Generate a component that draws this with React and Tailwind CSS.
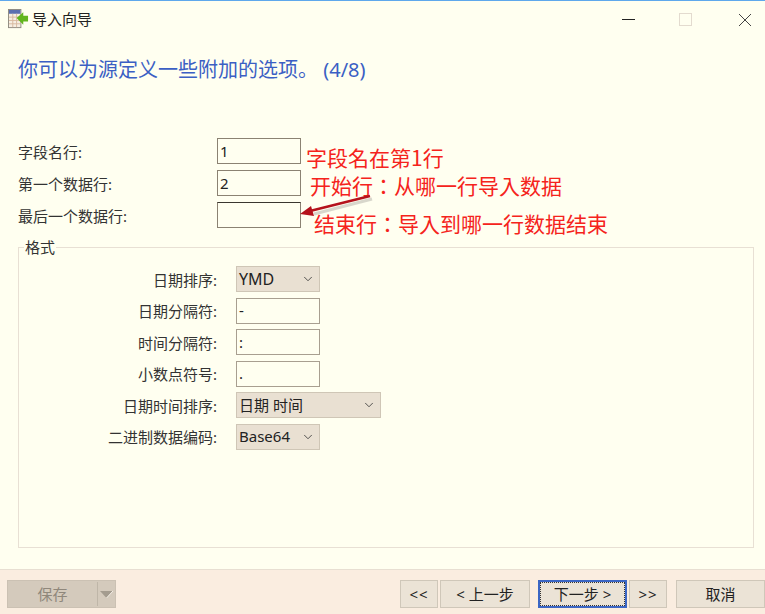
import { ChevronDown } from "lucide-react";

const font = "font-['Noto_Sans','Noto_Sans_CJK_SC',sans-serif]";

const topRows = [
    { label: "字段名行:", value: "1", border: "border-[#8b8272]" },
    { label: "第一个数据行:", value: "2", border: "border-[#8b8272]" },
    { label: "最后一个数据行:", value: "", border: "border-[#8b8272] border-t-[#3a372f]" },
];

const formatRows = [
    { label: "日期排序:", value: "YMD", select: true, width: "w-[84px]", size: "text-[16px]" },
    { label: "日期分隔符:", value: "-", width: "w-[84px]" },
    { label: "时间分隔符:", value: ":", width: "w-[84px]" },
    { label: "小数点符号:", value: ".", width: "w-[84px]" },
    { label: "日期时间排序:", value: "日期 时间", select: true, width: "w-[145px]", size: "text-[15px]" },
    { label: "二进制数据编码:", value: "Base64", select: true, width: "w-[84px]", size: "text-[15px]" },
];

const AppIcon = () => (
    <svg width="21" height="21" viewBox="0 0 22 22" className="shrink-0">
        <rect x="0.5" y="0.5" width="13" height="19" fill="#f6eee2" stroke="#8f8a80" />
        <rect x="1" y="1" width="12" height="4" fill="#5b6fb0" />
        <path d="M1 8.5h12M1 12h12M1 15.5h12M5 5v14M9 5v14" stroke="#d8b9a0" strokeWidth="1" />
        <path d="M9 9.5l7-6v3.5h5v6h-5v3.5z" fill="#62b51d" />
    </svg>
);

const SelectBox = ({ value, width, size }) => (
    <div className={`${width} h-[26px] flex items-center justify-between pl-[2px] pr-[4px] bg-[#e9e0d2] border border-[#cfc6b6] ${size} text-[#222]`}>
        <span>{value}</span>
        <ChevronDown size={14} strokeWidth={1.4} className="text-[#333]" />
    </div>
);

const TextBox = ({ value, width, border }) => (
    <div className={`${width} h-[26px] flex items-center px-[2px] bg-[#fffff0] border ${border} text-[15px] text-[#222]`}>
        {value}
    </div>
);

const FooterButton = ({ children, className }) => (
    <button className={`h-[28px] flex items-center justify-center bg-[#ebe3d6] border border-[#cfc7b9] text-[15px] text-[#222] ${className}`}>
        {children}
    </button>
);

export default function App() {
    return (
        <div className={`${font} relative w-[765px] h-[614px] overflow-hidden flex flex-col bg-[#fffff0] border-t border-[#5ea8ec]`}>
            {/* title bar */}
            <div className="h-[37px] flex items-center justify-between pl-[8px] shrink-0">
                <div className="flex items-center gap-[3px] text-[15px] text-[#222]">
                    <AppIcon />
                    <span>导入向导</span>
                </div>
                <div className="flex items-center">
                    <div className="w-[13px] h-px bg-[#222]" />
                    <div className="w-[13px] h-[13px] ml-[44px] border border-[#e3dbcf]" />
                    <svg className="ml-[46px] mr-[13px]" width="14" height="14" viewBox="0 0 14 14">
                        <path d="M1 1l12 12M13 1L1 13" stroke="#444" strokeWidth="1" />
                    </svg>
                </div>
            </div>

            <h1 className="pl-[18px] mt-[17px] h-[30px] leading-[30px] text-[20px] font-normal text-[#3b5fc4]">
                你可以为源定义一些附加的选项。 (4/8)
            </h1>

            {/* first rows */}
            <div className="flex flex-col gap-[6px] mt-[53px] pl-[18px]">
                {topRows.map((row) => (
                    <div key={row.label} className="flex items-center h-[26px]">
                        <div className="w-[199px] pt-[2px] text-[15px] text-[#333]">{row.label}</div>
                        <TextBox value={row.value} width="w-[84px]" border={row.border} />
                    </div>
                ))}
            </div>

            {/* format group */}
            <div className="relative mt-[19px] mx-[18px] w-[736px] h-[301px] border border-[#e8e0d4] shrink-0">
                <span className="absolute left-[5px] -top-[11px] px-[1px] bg-[#fffff0] text-[15px] leading-[20px] text-[#333]">格式</span>
                <div className="flex flex-col gap-[5.5px] pt-[18px]">
                    {formatRows.map((row) => (
                        <div key={row.label} className="flex items-center h-[26px]">
                            <div className="w-[198px] pt-[2px] text-right text-[15px] text-[#333]">{row.label}</div>
                            <div className="ml-[19px]">
                                {row.select ? (
                                    <SelectBox value={row.value} width={row.width} size={row.size} />
                                ) : (
                                    <TextBox value={row.value} width={row.width} border="border-[#a89f90]" />
                                )}
                            </div>
                        </div>
                    ))}
                </div>
            </div>

            {/* footer */}
            <div className="mt-[21px] flex-1 flex items-start pt-[10px] pl-[7px] bg-[#faede0] border-t border-[#e8dfd2]">
                <div className="w-[109px] h-[28px] flex items-center bg-[#d4cabc] border border-[#cbc1b3]">
                    <span className="w-[89px] text-center text-[15px] text-[#8f877b]">保存</span>
                    <div className="flex-1 h-[24px] border-l border-[#bfb6a8] flex items-center justify-center">
                        <svg width="13" height="7" viewBox="0 0 13 7">
                            <path d="M0 0h13L6.5 7z" fill="#a49c8f" />
                            <path d="M13 0L6.5 7" stroke="#f4efe6" strokeWidth="1" />
                        </svg>
                    </div>
                </div>
                <div className="flex ml-[284px]">
                    <FooterButton className="w-[38px] tracking-[1px]">&lt;&lt;</FooterButton>
                    <FooterButton className="w-[90px] ml-[2px]">&lt; 上一步</FooterButton>
                    <FooterButton className="w-[89px] ml-[8px] border-2 !border-[#3b66c4] outline-1 outline-dotted outline-[#333] -outline-offset-3">下一步 &gt;</FooterButton>
                    <FooterButton className="w-[38px] ml-[2px] tracking-[1px]">&gt;&gt;</FooterButton>
                    <FooterButton className="w-[89px] ml-[9px]">取消</FooterButton>
                </div>
            </div>

            {/* red annotations drawn over the dialog */}
            <span className="absolute left-[306px] top-[142px] font-['Noto_Sans_CJK_TC',sans-serif] text-[21px] leading-[28px] text-[#f5231c] whitespace-nowrap">字段名在第1行</span>
            <span className="absolute left-[310px] top-[170px] font-['Noto_Sans_CJK_TC',sans-serif] text-[21px] leading-[28px] text-[#f5231c] whitespace-nowrap">开始行：从哪一行导入数据</span>
            <span className="absolute left-[314px] top-[208px] font-['Noto_Sans_CJK_TC',sans-serif] text-[21px] leading-[28px] text-[#f5231c] whitespace-nowrap">结束行：导入到哪一行数据结束</span>
            <svg className="absolute left-[298px] top-[190px]" width="80" height="30" viewBox="0 0 80 30">
                <path d="M72 5L14 20" stroke="#b3b0a8" strokeWidth="3" opacity="0.5" transform="translate(2 3)" />
                <path d="M72 5L12 20" stroke="#b5121b" strokeWidth="2.5" />
                <path d="M2 23l11-8 3 10z" fill="#b5121b" />
            </svg>
        </div>
    );
}
